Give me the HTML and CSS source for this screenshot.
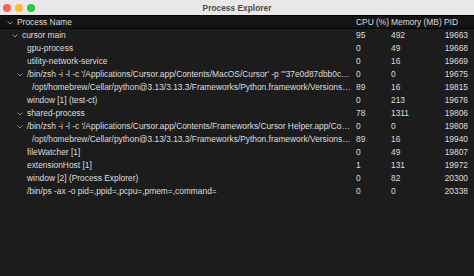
FILE: index.html
```html
<!DOCTYPE html>
<html lang="en">
<head>
    <meta charset="UTF-8">
    <meta name="viewport" content="width=device-width, initial-scale=1.0">
    <title>Process Explorer</title>
    <link rel="stylesheet" href="styles.css">
</head>
<body>

<div class="window">
    <div class="titlebar">
        <div class="lights">
            <span class="light red"></span>
            <span class="light yellow"></span>
            <span class="light green"></span>
        </div>
        <div class="title">Process Explorer</div>
    </div>

    <div class="row header">
        <div class="name lvl0">
            <svg class="chev" viewBox="0 0 6 4"><path d="M0.5 0.5 L3 3 L5.5 0.5"/></svg>
            <span>Process Name</span>
        </div>
        <div class="cpu">CPU (%)</div>
        <div class="mem">Memory (MB)</div>
        <div class="pid">PID</div>
    </div>

    <div class="list" id="list"></div>
</div>

<script>
    const processes = [
        { lvl: 1, open: true,  name: 'cursor main', cpu: 95, mem: 492, pid: 19663 },
        { lvl: 2, name: 'gpu-process', cpu: 0, mem: 49, pid: 19668 },
        { lvl: 2, name: 'utility-network-service', cpu: 0, mem: 16, pid: 19669 },
        { lvl: 2, open: true, name: '/bin/zsh -i -l -c \'/Applications/Cursor.app/Contents/MacOS/Cursor\' -p \'"37e0d87dbb0c" + JSON.stringify(process.env) + "37e0d87dbb0c"\'', cpu: 0, mem: 0, pid: 19675 },
        { lvl: 3, name: '/opt/homebrew/Cellar/python@3.13/3.13.3/Frameworks/Python.framework/Versions/3.13/Resources/Python.app', cpu: 89, mem: 16, pid: 19815 },
        { lvl: 2, name: 'window [1] (test-ct)', cpu: 0, mem: 213, pid: 19676 },
        { lvl: 2, open: true, name: 'shared-process', cpu: 78, mem: 1311, pid: 19806 },
        { lvl: 2, open: true, name: '/bin/zsh -i -l -c \'/Applications/Cursor.app/Contents/Frameworks/Cursor Helper.app/Contents/MacOS/Cursor Helper\'', cpu: 0, mem: 0, pid: 19808 },
        { lvl: 3, name: '/opt/homebrew/Cellar/python@3.13/3.13.3/Frameworks/Python.framework/Versions/3.13/Resources/Python.app', cpu: 89, mem: 16, pid: 19940 },
        { lvl: 2, name: 'fileWatcher [1]', cpu: 0, mem: 49, pid: 19807 },
        { lvl: 2, name: 'extensionHost [1]', cpu: 1, mem: 131, pid: 19972 },
        { lvl: 2, name: 'window [2] (Process Explorer)', cpu: 0, mem: 82, pid: 20300 },
        { lvl: 2, name: '/bin/ps -ax -o pid=,ppid=,pcpu=,pmem=,command=', cpu: 0, mem: 0, pid: 20338 }
    ];

    const list = document.getElementById('list');

    processes.forEach(p => {
        const row = document.createElement('div');
        row.className = 'row';
        const chev = p.open
            ? '<svg class="chev" viewBox="0 0 6 4"><path d="M0.5 0.5 L3 3 L5.5 0.5"/></svg>'
            : '';
        row.innerHTML = `
            <div class="name lvl${p.lvl}">${chev}${p.name}</div>
            <div class="cpu">${p.cpu}</div>
            <div class="mem">${p.mem}</div>
            <div class="pid num">${p.pid}</div>
        `;
        list.appendChild(row);
    });
</script>

</body>
</html>
```

FILE: styles.css
```css
body {
    margin: 0;
    padding: 0;
    background-color: #1c1c1c;
    font-family: "Liberation Sans", Arial, sans-serif;
    font-size: 8.4px;
    color: #dedede;
}

.window {
    height: 276px;
    overflow: hidden;
}

.titlebar {
    height: 15px;
    background-color: #e8e8e8;
    border-bottom: 1px solid #050505;
    display: flex;
    align-items: center;
    position: relative;
}

.lights {
    display: flex;
    gap: 4px;
    padding-left: 3px;
}

.light {
    width: 8px;
    height: 8px;
    border-radius: 50%;
}

.red { background-color: #fe5f57; }
.yellow { background-color: #febc2e; }
.green { background-color: #28c840; }

.title {
    position: absolute;
    left: 0;
    right: 0;
    text-align: center;
    font-weight: bold;
    color: #4b4b4b;
}

.row {
    display: grid;
    grid-template-columns: minmax(0, 1fr) 35px 53px 24px;
    height: 13px;
    line-height: 13px;
    padding-right: 6px;
}

.header {
    background-color: #141414;
    border-bottom: 1px solid #050505;
    height: 12px;
    line-height: 12px;
}

.name {
    position: relative;
    white-space: nowrap;
    overflow: hidden;
    text-overflow: ellipsis;
    padding-right: 4px;
}

.lvl0 { padding-left: 17px; }
.lvl1 { padding-left: 22px; }
.lvl2 { padding-left: 27px; }
.lvl3 { padding-left: 32px; }

.chev {
    width: 6px;
    height: 4px;
    position: absolute;
    top: 5px;
    margin-left: -10px;
    fill: none;
    stroke: #9a9a9a;
    stroke-width: 0.9;
}

.num {
    text-align: right;
}
```
